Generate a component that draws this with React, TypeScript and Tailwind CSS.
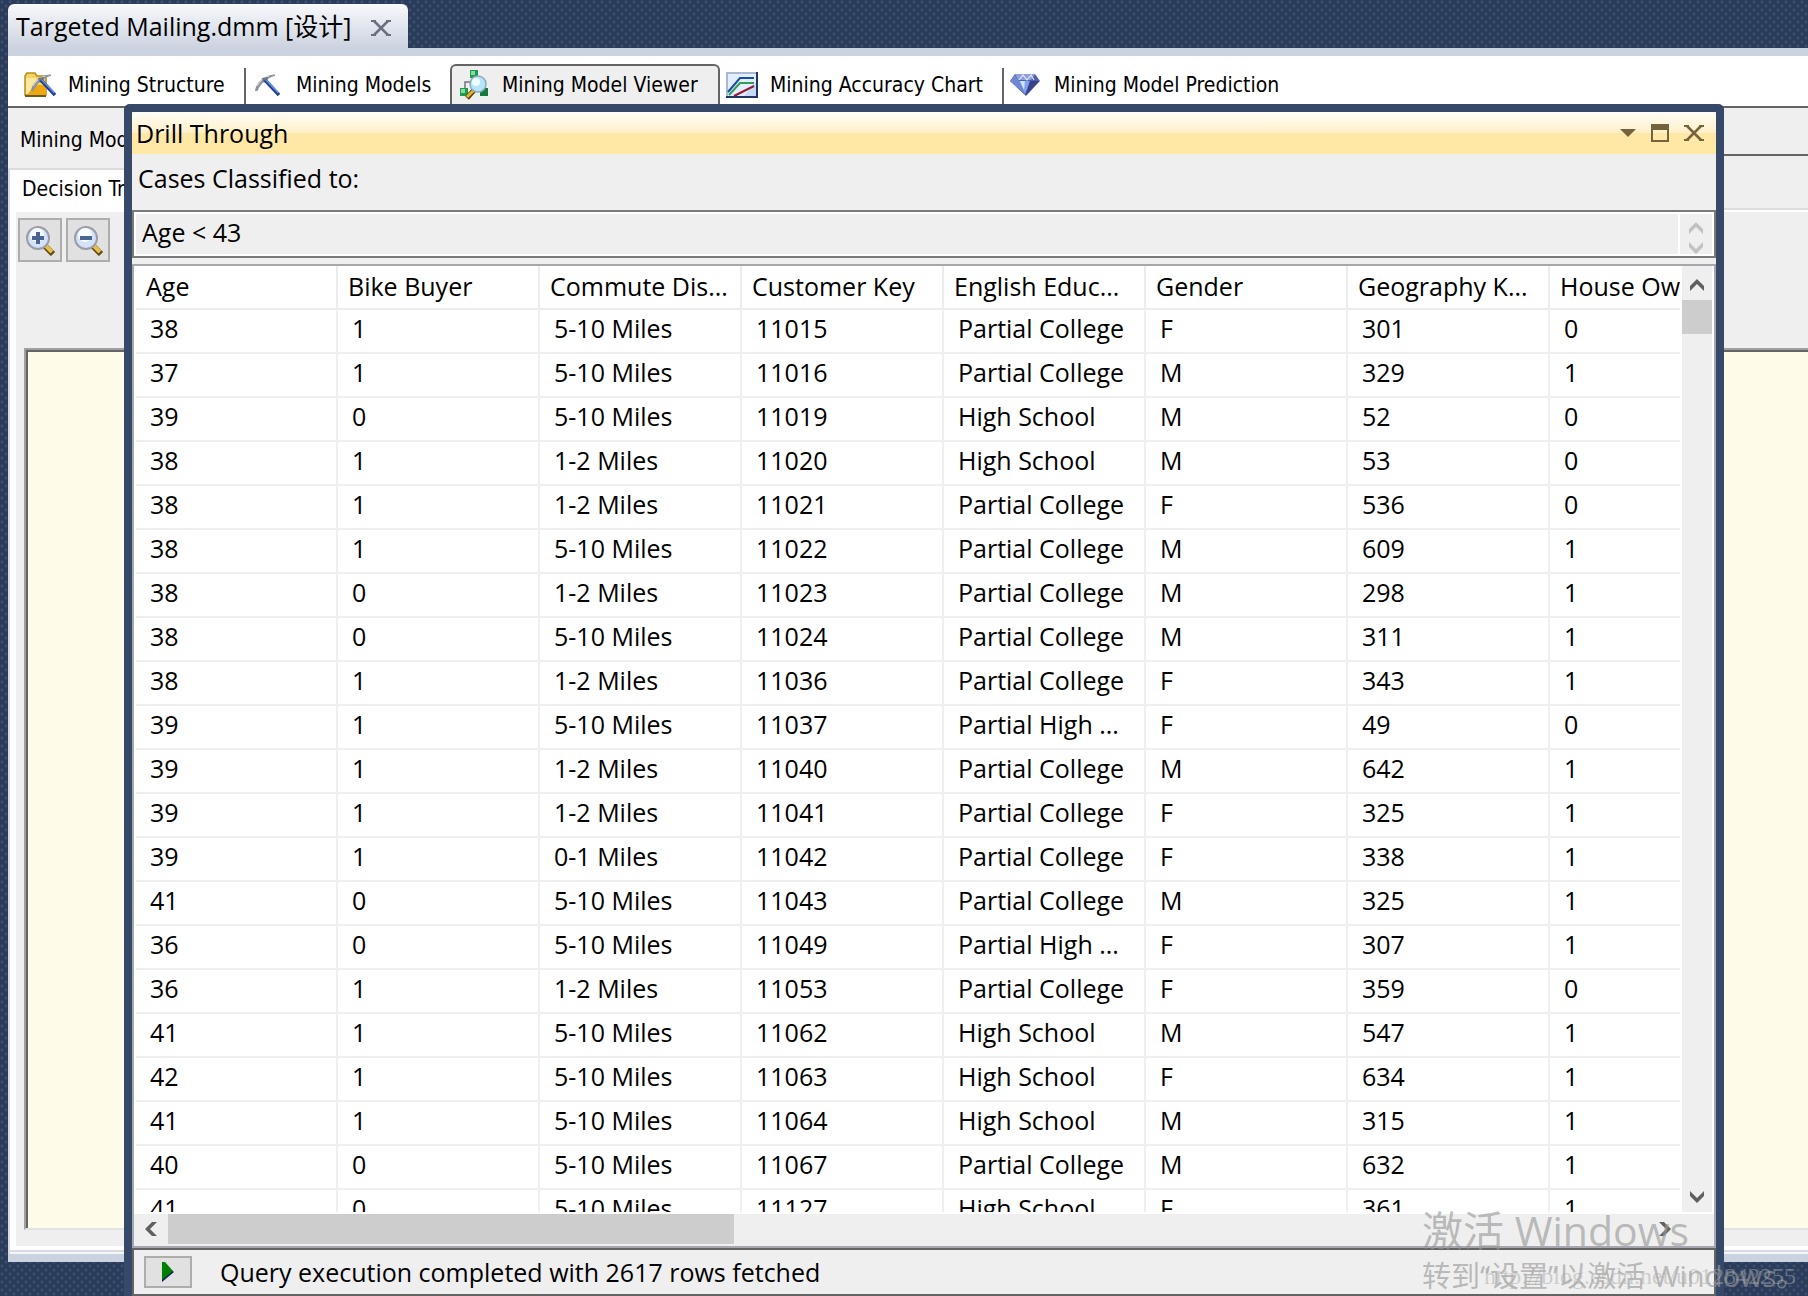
import React from 'react';

type Row = [string, string, string, string, string, string, string, string];

const columns = [
  'Age',
  'Bike Buyer',
  'Commute Dis...',
  'Customer Key',
  'English Educ...',
  'Gender',
  'Geography K...',
  'House Owner',
];

const rows: Row[] = [
  ['38', '1', '5-10 Miles', '11015', 'Partial College', 'F', '301', '0'],
  ['37', '1', '5-10 Miles', '11016', 'Partial College', 'M', '329', '1'],
  ['39', '0', '5-10 Miles', '11019', 'High School', 'M', '52', '0'],
  ['38', '1', '1-2 Miles', '11020', 'High School', 'M', '53', '0'],
  ['38', '1', '1-2 Miles', '11021', 'Partial College', 'F', '536', '0'],
  ['38', '1', '5-10 Miles', '11022', 'Partial College', 'M', '609', '1'],
  ['38', '0', '1-2 Miles', '11023', 'Partial College', 'M', '298', '1'],
  ['38', '0', '5-10 Miles', '11024', 'Partial College', 'M', '311', '1'],
  ['38', '1', '1-2 Miles', '11036', 'Partial College', 'F', '343', '1'],
  ['39', '1', '5-10 Miles', '11037', 'Partial High ...', 'F', '49', '0'],
  ['39', '1', '1-2 Miles', '11040', 'Partial College', 'M', '642', '1'],
  ['39', '1', '1-2 Miles', '11041', 'Partial College', 'F', '325', '1'],
  ['39', '1', '0-1 Miles', '11042', 'Partial College', 'F', '338', '1'],
  ['41', '0', '5-10 Miles', '11043', 'Partial College', 'M', '325', '1'],
  ['36', '0', '5-10 Miles', '11049', 'Partial High ...', 'F', '307', '1'],
  ['36', '1', '1-2 Miles', '11053', 'Partial College', 'F', '359', '0'],
  ['41', '1', '5-10 Miles', '11062', 'High School', 'M', '547', '1'],
  ['42', '1', '5-10 Miles', '11063', 'High School', 'F', '634', '1'],
  ['41', '1', '5-10 Miles', '11064', 'High School', 'M', '315', '1'],
  ['40', '0', '5-10 Miles', '11067', 'Partial College', 'M', '632', '1'],
  ['41', '0', '5-10 Miles', '11127', 'High School', 'F', '361', '1'],
];

function PickShape() {
  return (
    <>
      <path d="M1 18C2 12 5 8 9 5.500C13 3 17 1.500 21 1.500L21 3C17 4 14 5.500 11 8C7 11 5 14 3.500 18Z" fill="#8d949b" />
      <path d="M3 13C5 9 9 5 15 3" fill="none" stroke="#cfd4d8" strokeWidth="1.200" />
      <path d="M8 5L14 4L13 10L9 9Z" fill="#70777f" />
      <path d="M11 7L25 22" stroke="#1c3f94" strokeWidth="3.500" />
      <path d="M11.500 6.500L24.500 20" stroke="#6f9be8" strokeWidth="1.200" />
    </>
  );
}

function StructureIcon() {
  return (
    <svg width="32" height="26" viewBox="0 0 32 26">
      <path d="M1 4L3 1H11L13 4H22V23H1Z" fill="#f5d267" stroke="#b98a1d" strokeWidth="1.500" />
      <path d="M2 6H12V22H2Z" fill="#fbe9a0" />
      <path d="M3 23L11 13H22V23Z" fill="#eea70c" />
      <path d="M1 24H22" stroke="#6b5a22" strokeWidth="2" />
      <g transform="translate(6 1)">
        <PickShape />
      </g>
    </svg>
  );
}

function ModelsIcon() {
  return (
    <svg width="28" height="26" viewBox="0 0 28 26">
      <g transform="translate(0 1)">
        <PickShape />
      </g>
    </svg>
  );
}

function ViewerIcon() {
  return (
    <svg width="30" height="30" viewBox="0 0 30 30">
      <path d="M14 8V13M5 18V12H12" fill="none" stroke="#6e7479" strokeWidth="1.500" />
      <rect x="10" y="0" width="8" height="8" fill="#1f9a50" />
      <rect x="11" y="1" width="4" height="4" fill="#86dda2" />
      <rect x="0" y="18" width="8" height="8" fill="#1f9a50" />
      <rect x="1" y="19" width="4" height="4" fill="#86dda2" />
      <rect x="20" y="18" width="8" height="8" fill="#147a3c" />
      <path d="M14 20L7 28" stroke="#4e3d10" strokeWidth="5" />
      <path d="M14 20L7 27" stroke="#e5b32e" strokeWidth="3" />
      <circle cx="18" cy="14" r="8" fill="#b5e6f8" stroke="#8fa9bb" strokeWidth="1.500" />
      <circle cx="16" cy="12" r="4" fill="#effbff" />
    </svg>
  );
}

function ChartIcon() {
  return (
    <svg width="32" height="26" viewBox="0 0 32 26">
      <rect x="1" y="1" width="30" height="24" fill="#e4edfb" stroke="#a9b8d4" strokeWidth="2" />
      <path d="M18 24H30V10Z" fill="#c6daf8" />
      <path d="M31 0V25H0" fill="none" stroke="#1d3768" strokeWidth="2" />
      <path d="M2 20L14 6H28" fill="none" stroke="#174f9c" strokeWidth="2" />
      <path d="M3 23L14 11H28" fill="none" stroke="#2f9e57" strokeWidth="2" />
      <path d="M8 24L28 14" fill="none" stroke="#8e1f33" strokeWidth="2" />
    </svg>
  );
}

function DiamondIcon() {
  return (
    <svg width="30" height="22" viewBox="0 0 30 22">
      <path d="M5 0H25L30 7L16 22L0 7Z" fill="#4f5fae" />
      <path d="M5 0H25L21 6H8Z" fill="#8f9fdc" />
      <path d="M0 7L5 1L9 7L15 20Z" fill="#6f88d2" />
      <path d="M9 7H20L15 20Z" fill="#7fa3ea" />
      <path d="M10 7H15L14 16Z" fill="#cfe2fd" />
      <path d="M20 7H29L16 21Z" fill="#3b3f86" />
      <path d="M9 6L13 1L17 6L21 1L24 6" fill="none" stroke="#dfe6fb" strokeWidth="1.200" />
    </svg>
  );
}

function MagnifierIcon({ plus }: { plus?: boolean }) {
  return (
    <svg width="32" height="32" viewBox="0 0 32 32">
      <path d="M20 21L29 30" stroke="#5c4a18" strokeWidth="6" />
      <path d="M20 20L28 28" stroke="#e8bf45" strokeWidth="4" />
      <circle cx="14" cy="14" r="11" fill="#d3e1fa" stroke="#9a9da3" strokeWidth="2" />
      <circle cx="13" cy="11" r="7" fill="#f7faff" />
      <path d="M8 14H20" stroke="#4a6591" strokeWidth="4" />
      {plus && <path d="M14 8V20" stroke="#4a6591" strokeWidth="4" />}
    </svg>
  );
}

function CloseIcon() {
  return (
    <svg width="20" height="16" viewBox="0 0 20 16">
      <path d="M3 1L17 15M17 1L3 15" stroke="currentColor" strokeWidth="2.500" />
      <path d="M0 1H5M15 1H20M0 15H5M15 15H20" stroke="currentColor" strokeWidth="2" />
    </svg>
  );
}

function Chevron({ className }: { className?: string }) {
  return (
    <svg className={className} width="14" height="12" viewBox="0 0 14 12">
      <path d="M0 7L7 0L14 7V12L7 5L0 12Z" fill="currentColor" />
    </svg>
  );
}

const tabs = [
  { label: 'Mining Structure', icon: <StructureIcon />, style: 'w-[238px] pl-4 border-r-2 border-[#646464]', gap: 'gap-3' },
  { label: 'Mining Models', icon: <ModelsIcon />, style: 'w-[204px] pl-2', gap: 'gap-3.5' },
  { label: 'Mining Model Viewer', icon: <ViewerIcon />, style: 'w-[270px] pl-2', gap: 'gap-3' },
  { label: 'Mining Accuracy Chart', icon: <ChartIcon />, style: 'w-[284px] pl-1.5 border-r-2 border-[#646464]', gap: 'gap-3' },
  { label: 'Mining Model Prediction', icon: <DiamondIcon />, style: 'w-[290px] pl-1.5', gap: 'gap-3.5' },
];

function DesignerTabs() {
  return (
    <nav className="flex h-[52px] shrink-0 items-end border-b-2 border-[#646464] bg-white">
      {tabs.map((tab) =>
        tab.label === 'Mining Model Viewer' ? (
          <button
            key={tab.label}
            className={`flex h-[42px] items-center rounded-t-md border-2 border-b-0 border-[#646464] bg-[#efefef] pb-0.5 whitespace-nowrap ${tab.style} ${tab.gap}`}
          >
            {tab.icon}
            {tab.label}
          </button>
        ) : (
          <button key={tab.label} className={`flex h-[38px] items-center pb-1 whitespace-nowrap ${tab.style} ${tab.gap}`}>
            {tab.icon}
            {tab.label}
          </button>
        )
      )}
    </nav>
  );
}

function Designer() {
  return (
    <main className="ml-2 flex min-h-0 flex-1 flex-col border-b-8 border-[#ccd3e0] bg-[#efefef] font-['DejaVu_Sans_Condensed','DejaVu_Sans',sans-serif] text-[21px] leading-[28px] text-black">
      <DesignerTabs />
      <div className="flex h-[60px] shrink-0">
        <span className="w-[160px] pt-[18px] pl-3 whitespace-nowrap">Mining Model:</span>
        <div className="h-12 flex-1 border-b-2 border-[#646464]" />
      </div>
      <div className="flex min-h-0 flex-1 flex-col border-l-2 border-[#d8dbe2]">
        <div className="flex h-[42px] shrink-0">
          <button className="w-[160px] border-t-2 border-[#dcdcdc] bg-white pb-0.5 pl-3 text-left whitespace-nowrap">Decision Tree</button>
          <div className="flex-1 border-b-2 border-[#dcdcdc]" />
        </div>
        <div className="flex min-h-0 flex-1 flex-col border-2 border-r-0 border-b-4 border-l-[6px] border-white">
          <div className="flex h-[136px] shrink-0 gap-1 pt-1.5 pl-0.5">
            <button aria-label="Zoom in" className="flex size-11 items-center justify-center border-2 border-[#adadad] bg-[#e1e1e1]">
              <MagnifierIcon plus />
            </button>
            <button aria-label="Zoom out" className="flex size-11 items-center justify-center border-2 border-[#adadad] bg-[#e1e1e1]">
              <MagnifierIcon />
            </button>
          </div>
          <div className="mb-4 ml-2 flex-1 border-t-2 border-b-2 border-l-2 border-t-[#a0a0a0] border-b-[#e3e3e3] border-l-[#a0a0a0]">
            <div className="h-full border-t-2 border-l-2 border-[#646464] bg-[#fefbe8]" />
          </div>
        </div>
        <div className="h-1 shrink-0 border-t-2 border-[#d8dbe2] bg-[#f4f5f8]" />
      </div>
    </main>
  );
}

function ResultGrid() {
  return (
    <div className="mt-1.5 flex min-h-0 flex-1 flex-col border-2 border-[#a7a8af] bg-white">
      <div className="flex min-h-0 flex-1">
        <div className="mb-0.5 ml-0.5 min-w-0 flex-1 overflow-hidden">
          <table className="w-[1616px] table-fixed border-separate border-spacing-0 text-left">
            <thead>
              <tr>
                {columns.map((name) => (
                  <th key={name} className="h-11 border-r-2 border-b-2 border-[#ececec] p-0 pb-0.5 pl-2.5 font-normal whitespace-nowrap">
                    {name}
                  </th>
                ))}
              </tr>
            </thead>
            <tbody>
              {rows.map((row) => (
                <tr key={row[3]}>
                  {row.map((cell, i) => (
                    <td key={i} className="h-11 border-r-2 border-b-2 border-[#efefef] p-0 pb-1.5 pl-3.5 whitespace-nowrap">
                      {cell}
                    </td>
                  ))}
                </tr>
              ))}
            </tbody>
          </table>
        </div>
        <div className="mr-0.5 mb-0.5 ml-0.5 flex w-[30px] flex-col bg-[#efefef] text-[#606060]">
          <button aria-label="Scroll up" className="flex h-[34px] items-center justify-center pt-1">
            <Chevron />
          </button>
          <div className="h-[34px] bg-[#cdcdcd]" />
          <div className="flex-1" />
          <button aria-label="Scroll down" className="flex h-[34px] items-center justify-center pt-1">
            <Chevron className="rotate-180" />
          </button>
        </div>
      </div>
      <div className="flex h-8 shrink-0 bg-[#efefef] pr-8 pb-0.5 text-[#606060]">
        <button aria-label="Scroll left" className="flex w-[34px] items-center justify-center">
          <Chevron className="-rotate-90" />
        </button>
        <div className="w-[566px] bg-[#cdcdcd]" />
        <div className="flex-1" />
        <button aria-label="Scroll right" className="flex w-[34px] items-center justify-center">
          <Chevron className="rotate-90" />
        </button>
      </div>
    </div>
  );
}

function DrillThrough() {
  return (
    <section className="absolute top-[104px] right-[84px] bottom-0 left-[124px] flex flex-col rounded-t-md border-8 border-b-0 border-[#364968] bg-[#efefef]">
      <header className="flex h-[42px] shrink-0 items-center rounded-t-sm bg-linear-to-b from-[#fffdf6] from-0% via-[#fff0c8] via-50% to-[#ffe8a6] to-50% pr-3 pl-1">
        <h1 className="flex-1">Drill Through</h1>
        <div className="flex items-center gap-[15px] text-[#75633d]">
          <button aria-label="Window position">
            <svg width="16" height="8" viewBox="0 0 16 8">
              <path d="M0 0H16L8 8Z" fill="currentColor" />
            </svg>
          </button>
          <button aria-label="Maximize" className="h-[18px] w-[18px] border-2 border-t-[6px] border-[#75633d]" />
          <button aria-label="Close">
            <CloseIcon />
          </button>
        </div>
      </header>
      <label htmlFor="cases" className="h-14 shrink-0 pt-1.5 pl-1.5">
        Cases Classified to:
      </label>
      <div className="flex h-12 shrink-0 border-2 border-[#7a7a7a] bg-white p-0.5">
        <input id="cases" readOnly value="Age < 43" className="min-w-0 flex-1 bg-[#efefef] pb-1 pl-1.5 outline-none" />
        <div className="ml-0.5 flex w-8 flex-col items-center justify-end gap-2 bg-[#efefef] text-[#c2c2c2]">
          <Chevron />
          <Chevron className="rotate-180" />
        </div>
      </div>
      <ResultGrid />
      <footer className="flex h-12 shrink-0 items-center gap-7 border-2 border-[#646464] pl-2.5">
        <button aria-label="Run query" className="flex h-8 w-12 items-center justify-center border-2 border-[#adadad] bg-[#e1e1e1]">
          <svg width="12" height="20" viewBox="0 0 12 20">
            <path d="M0 1L12 10L0 20Z" fill="#0b1f5c" />
            <path d="M0 0H3L11 9L0 18Z" fill="#008000" />
          </svg>
        </button>
        <p>Query execution completed with 2617 rows fetched</p>
      </footer>
    </section>
  );
}

export default function App() {
  return (
    <div className="relative flex h-screen flex-col overflow-hidden bg-[#2b3c5a] bg-[radial-gradient(circle_at_2px_2px,#3a4e70_1px,transparent_2px),radial-gradient(circle_at_6px_6px,#3a4e70_1px,transparent_2px)] bg-size-[8px_8px] pt-1 pb-[34px] font-['Open_Sans','Noto_Sans_CJK_SC',sans-serif] text-[25px] leading-[36px] text-black">
      <div className="ml-2 flex h-[52px] shrink-0 flex-col">
        <div className="flex h-11 w-[400px] items-center gap-5 rounded-t-md bg-linear-to-b from-[#f8f9fb] to-[#ccd3e0] pl-2">
          <span className="whitespace-nowrap">Targeted Mailing.dmm [设计]</span>
          <button aria-label="Close document" className="pt-1 text-[#6b7080]">
            <CloseIcon />
          </button>
        </div>
        <div className="h-2 bg-[#ccd3e0]" />
      </div>
      <Designer />
      <DrillThrough />
      <div className="pointer-events-none absolute right-0 bottom-0 w-[386px] whitespace-nowrap text-[#999999]/65">
        <p className="text-[41px] leading-[52px]">激活 Windows</p>
        <p className="text-[29px] leading-[40px]">转到“设置”以激活 Windows。</p>
      </div>
      <p className="pointer-events-none absolute right-3 bottom-1.5 font-['Liberation_Serif',serif] text-[24px] leading-[28px] whitespace-nowrap text-[#aaaaaa]/50">
        http://blog.csdn.net/u012842255
      </p>
    </div>
  );
}
